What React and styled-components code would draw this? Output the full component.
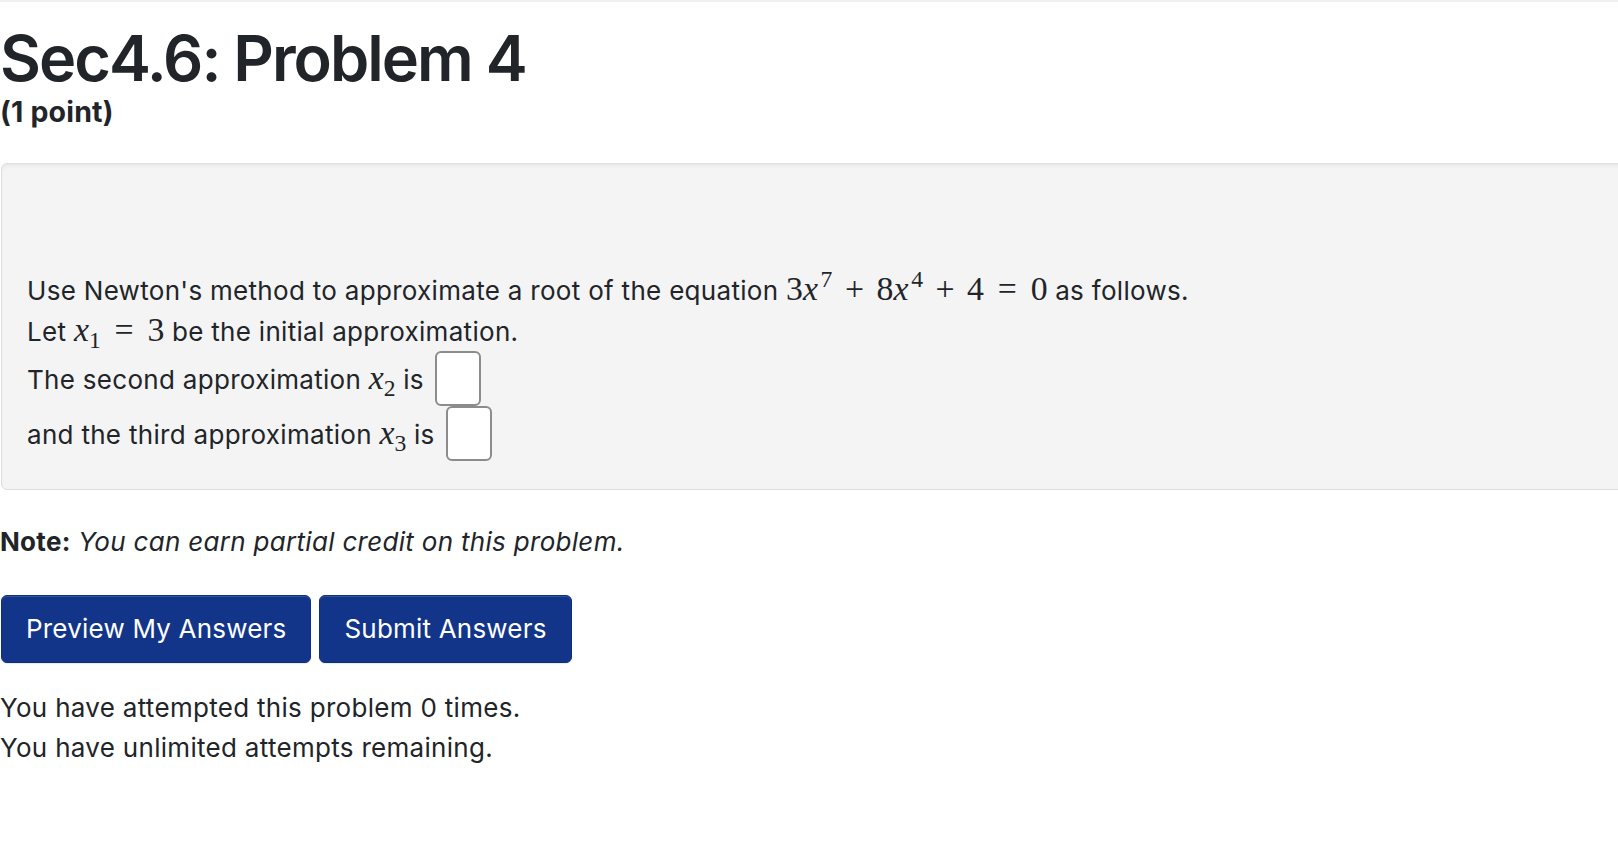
import React from "react";
import styled, { createGlobalStyle } from "styled-components";

const Global = createGlobalStyle`
  html, body { margin: 0; padding: 0; background: #fff; overflow: hidden; }
  body { font-family: Inter, "Noto Sans", "Liberation Sans", sans-serif; color: #212529; }
`;

const Page = styled.div`
  width: 1680px;
  border-top: 2px solid #f0f0f0;
  padding: 0 0 40px 0;
`;

const Title = styled.h1`
  margin: 19px 0 0 0;
  font-size: 63px;
  line-height: 1.2;
  font-weight: 600;
  letter-spacing: -2px;
  color: #212529;
`;

const Points = styled.div`
  font-size: 28.5px;
  line-height: 1.2;
  font-weight: 700;
  letter-spacing: 0.2px;
  margin-top: -2px;
`;

const Panel = styled.div`
  margin: 34px 0 0 1px;
  background: #f4f4f4;
  border: 1px solid #dedede;
  border-radius: 6px;
  box-shadow: inset 0 3px 4px -2px rgba(0, 0, 0, 0.08);
  padding: 105px 25px 28px 25px;
  font-size: 26px;
  line-height: 39px;
  letter-spacing: 0.3px;
`;

const Line = styled.div`
  display: flex;
  align-items: center;
  gap: 11px;
  min-height: ${(p) => (p.$tall ? "55px" : "39px")};
`;

const AnswerBox = styled.span`
  display: inline-block;
  box-sizing: border-box;
  width: 46px;
  height: 55px;
  background: #fff;
  border: 2px solid #8c8c8c;
  border-radius: 6px;
`;

const Math = styled.span`
  font-family: "Liberation Serif", "DejaVu Serif", serif;
  font-size: 1.3em;
  letter-spacing: 0;
  white-space: nowrap;
`;

const V = styled.i`
  font-style: italic;
  margin-right: ${(p) => (p.$tight ? "0" : "0.08em")};
`;

const Sup = styled.sup`
  font-size: 0.7em;
  vertical-align: 0.55em;
  line-height: 0;
`;

const Sub = styled.sub`
  font-size: 0.7em;
  vertical-align: -0.3em;
  line-height: 0;
`;

const Op = styled.span`
  margin: 0 ${(p) => (p.$rel ? "0.41em" : "0.37em")};
`;

const Note = styled.p`
  margin: 32px 0 0 0;
  font-size: 26px;
  line-height: 40px;
  letter-spacing: 0.3px;
  b { font-weight: 700; }
  em { font-style: italic; }
`;

const ButtonRow = styled.div`
  display: flex;
  gap: 8px;
  margin: 33px 0 0 1px;
`;

const Button = styled.button`
  font-family: Inter, "Noto Sans", "Liberation Sans", sans-serif;
  font-size: 26px;
  line-height: 40px;
  letter-spacing: 0.2px;
  color: #fff;
  background: #12358a;
  border: 1px solid #0e2f7d;
  border-radius: 6px;
  padding: 13px 24px;
  box-shadow: inset 0 1px 0 rgba(255, 255, 255, 0.15), 0 1px 1px rgba(0, 0, 0, 0.08);
  cursor: pointer;
`;

const Attempts = styled.div`
  margin-top: 25px;
  font-size: 26px;
  line-height: 40px;
  letter-spacing: 0.3px;
`;

export default function App() {
  return (
    <>
      <Global />
      <Page>
        <Title>Sec4.6: Problem 4</Title>
        <Points>(1 point)</Points>
        <Panel>
          <Line>
            <span>
              Use Newton's method to approximate a root of the equation{" "}
              <Math>
                3<V>x</V>
                <Sup>7</Sup>
                <Op>+</Op>8<V>x</V>
                <Sup>4</Sup>
                <Op>+</Op>4<Op $rel>=</Op>0
              </Math>{" "}
              as follows.
            </span>
          </Line>
          <Line>
            <span>
              Let{" "}
              <Math>
                <V $tight>x</V>
                <Sub>1</Sub>
                <Op $rel>=</Op>3
              </Math>{" "}
              be the initial approximation.
            </span>
          </Line>
          <Line $tall>
            <span>
              The second approximation{" "}
              <Math>
                <V $tight>x</V>
                <Sub>2</Sub>
              </Math>{" "}
              is
            </span>
            <AnswerBox />
          </Line>
          <Line $tall>
            <span>
              and the third approximation{" "}
              <Math>
                <V $tight>x</V>
                <Sub>3</Sub>
              </Math>{" "}
              is
            </span>
            <AnswerBox />
          </Line>
        </Panel>
        <Note>
          <b>Note:</b> <em>You can earn partial credit on this problem.</em>
        </Note>
        <ButtonRow>
          <Button>Preview My Answers</Button>
          <Button>Submit Answers</Button>
        </ButtonRow>
        <Attempts>
          You have attempted this problem 0 times.
          <br />
          You have unlimited attempts remaining.
        </Attempts>
      </Page>
    </>
  );
}
